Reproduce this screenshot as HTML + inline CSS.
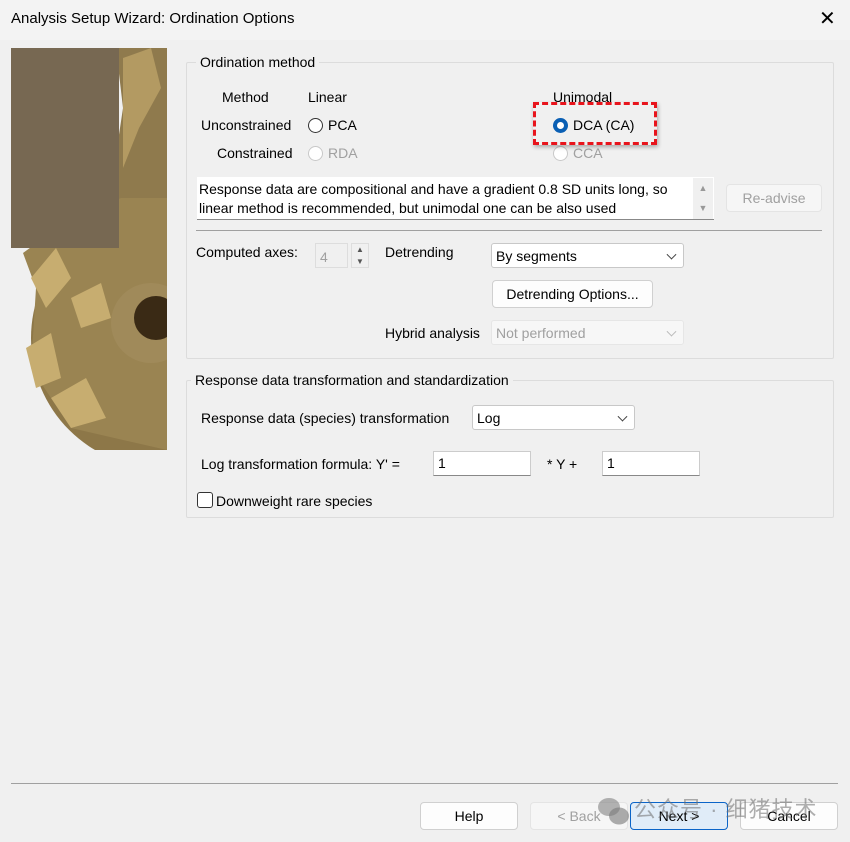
<!DOCTYPE html>
<html><head><meta charset="utf-8"><style>
*{box-sizing:border-box}
body{margin:0;width:850px;height:842px;background:#f0f0f0;font-family:"Liberation Sans","Noto Sans CJK SC",sans-serif;font-size:14px;color:#000;position:relative;overflow:hidden}
.a{position:absolute;white-space:nowrap}
.grp{position:absolute;border:1px solid #dcdcdc;border-radius:2px}
.leg{position:absolute;background:#f0f0f0;padding:0 4px;font-size:14px}
.rad{position:absolute;width:15px;height:15px;border:1px solid #333;border-radius:50%;background:#fff}
.dis{color:#a0a0a0}
.btn{position:absolute;border:1px solid #d0d0d0;border-radius:4px;background:#fdfdfd;text-align:center;font-size:14px}
.sel{position:absolute;border:1px solid #c8c8c8;border-radius:3px;background:#fff;padding-left:4px;font-size:14px}
.chev{position:absolute;right:8px;top:50%;width:7px;height:7px;border-right:1.2px solid #444;border-bottom:1.2px solid #444;transform:translateY(-70%) rotate(45deg)}
.inp{position:absolute;background:#fff;border:1px solid #ccc;border-bottom:1px solid #888;padding-left:4px;font-size:14px}
</style></head><body>
<div class="a" style="left:0;top:0;width:850px;height:40px;background:#f3f3f3"></div>
<div class="a" style="left:11px;top:10px;font-size:15px">Analysis Setup Wizard: Ordination Options</div>
<div class="a" style="left:819px;top:6px;font-size:20px;font-weight:300">✕</div>

<svg class="a" style="left:11px;top:48px" width="156" height="402" viewBox="0 0 156 402">
<rect x="0" y="0" width="156" height="402" fill="#f0f0f0"/>
<polygon points="105,0 156,0 156,190 115,210 100,140 112,60" fill="#8f7a4d"/>
<polygon points="112,10 140,0 150,40 128,80 112,120" fill="#b39a62"/>
<circle cx="150" cy="290" r="130" fill="#8d7748"/>
<polygon points="12,205 60,170 110,150 156,150 156,402 60,380 20,320 25,240" fill="#9a8452"/>
<path d="M20,230 L45,200 L60,230 L35,260Z M15,300 L40,285 L50,330 L25,340Z M40,350 L75,330 L95,370 L60,380Z M60,250 L90,235 L100,270 L70,280Z" fill="#c7ad70"/>
<circle cx="140" cy="275" r="40" fill="#a08a5a"/>
<circle cx="145" cy="270" r="22" fill="#3a2a15"/>
<rect x="0" y="0" width="108" height="200" fill="#776852"/>
</svg>

<div class="grp" style="left:186px;top:62px;width:648px;height:297px"></div>
<div class="leg" style="left:196px;top:54px">Ordination method</div>
<div class="a" style="left:222px;top:89px">Method</div>
<div class="a" style="left:308px;top:89px">Linear</div>
<div class="a" style="left:553px;top:89px">Unimodal</div>
<div class="a" style="left:201px;top:117px">Unconstrained</div>
<div class="rad" style="left:308px;top:118px"></div>
<div class="a" style="left:328px;top:117px">PCA</div>
<div class="a" style="left:217px;top:145px">Constrained</div>
<div class="rad" style="left:308px;top:146px;border-color:#c8c8c8"></div>
<div class="a dis" style="left:328px;top:145px">RDA</div>
<div class="rad" style="left:553px;top:118px;border:4px solid #0a5fb4"></div>
<div class="a" style="left:573px;top:117px">DCA (CA)</div>
<div class="rad" style="left:553px;top:146px;border-color:#c8c8c8"></div>
<div class="a dis" style="left:573px;top:145px">CCA</div>
<div class="a" style="left:533px;top:102px;width:124px;height:43px;border:3px dashed #e8141c;box-shadow:1px 2px 4px rgba(0,0,0,.3)"></div>

<div class="a" style="left:197px;top:177px;width:517px;height:43px;background:#fff;border-bottom:1px solid #888"></div>
<div class="a" style="left:199px;top:180px;line-height:19px">Response data are compositional and have a gradient 0.8 SD units long, so<br>linear method is recommended, but unimodal one can be also used</div>
<div class="a" style="left:693px;top:178px;width:20px;height:41px;background:#f0f0f0;color:#999;font-size:9px;text-align:center;line-height:20px">▲<br>▼</div>
<div class="btn dis" style="left:726px;top:184px;width:96px;height:28px;line-height:26px;background:#f6f6f6;border-color:#e4e4e4">Re-advise</div>
<div class="a" style="left:196px;top:230px;width:626px;height:1px;background:#a0a0a0"></div>

<div class="a" style="left:196px;top:244px">Computed axes:</div>
<div class="a dis" style="left:315px;top:243px;width:33px;height:25px;border:1px solid #ddd;padding:5px 0 0 4px">4</div>
<div class="a" style="left:351px;top:243px;width:18px;height:25px;border:1px solid #ddd;font-size:8px;color:#555;text-align:center;line-height:12px">▲<br>▼</div>
<div class="a" style="left:385px;top:244px">Detrending</div>
<div class="sel" style="left:491px;top:243px;width:193px;height:25px;line-height:24px">By segments<span class="chev"></span></div>
<div class="btn" style="left:492px;top:280px;width:161px;height:28px;line-height:26px">Detrending Options...</div>
<div class="a" style="left:385px;top:325px">Hybrid analysis</div>
<div class="sel dis" style="left:491px;top:320px;width:193px;height:25px;line-height:24px;border-color:#e6e6e6;background:#f7f7f7">Not performed<span class="chev" style="border-color:#bbb"></span></div>

<div class="grp" style="left:186px;top:380px;width:648px;height:138px"></div>
<div class="leg" style="left:191px;top:372px">Response data transformation and standardization</div>
<div class="a" style="left:201px;top:410px">Response data (species) transformation</div>
<div class="sel" style="left:472px;top:405px;width:163px;height:25px;line-height:24px">Log<span class="chev"></span></div>
<div class="a" style="left:201px;top:456px">Log transformation formula: Y' =</div>
<div class="inp" style="left:433px;top:451px;width:98px;height:25px;line-height:23px">1</div>
<div class="a" style="left:547px;top:456px">* Y +</div>
<div class="inp" style="left:602px;top:451px;width:98px;height:25px;line-height:23px">1</div>
<div class="a" style="left:197px;top:492px;width:16px;height:16px;border:1px solid #333;border-radius:3px;background:#fff"></div>
<div class="a" style="left:216px;top:493px">Downweight rare species</div>

<div class="a" style="left:11px;top:783px;width:827px;height:1px;background:#a0a0a0"></div>
<div class="btn" style="left:420px;top:802px;width:98px;height:28px;line-height:26px">Help</div>
<div class="btn dis" style="left:530px;top:802px;width:98px;height:28px;line-height:26px;background:#f6f6f6;border-color:#e4e4e4">&lt; Back</div>
<div class="btn" style="left:630px;top:802px;width:98px;height:28px;line-height:26px;background:#e0ecf8;border-color:#0a64c8">Next &gt;</div>
<div class="btn" style="left:740px;top:802px;width:98px;height:28px;line-height:26px">Cancel</div>
<svg class="a" style="left:597px;top:796px" width="34" height="32" viewBox="0 0 34 32">
<ellipse cx="12" cy="11" rx="11" ry="9" fill="rgba(120,120,120,.55)"/>
<ellipse cx="22" cy="20" rx="10" ry="8.5" fill="rgba(120,120,120,.6)"/>
</svg>
<div class="a" style="left:634px;top:792px;font-size:22px;letter-spacing:1px;color:rgba(110,110,110,.55)">公众号 · 细猪技术</div>
</body></html>
